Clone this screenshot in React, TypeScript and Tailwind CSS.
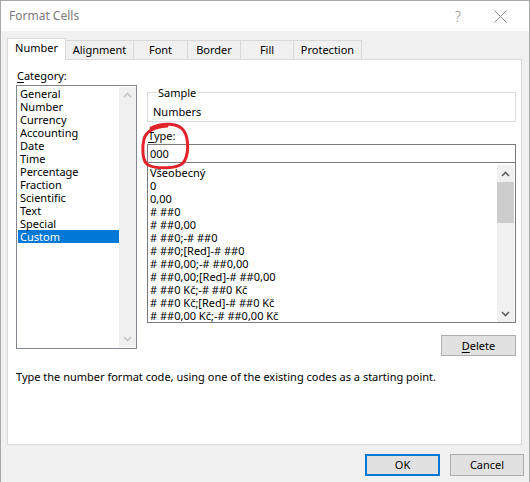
import React from "react";

const categories = [
  "General",
  "Number",
  "Currency",
  "Accounting",
  "Date",
  "Time",
  "Percentage",
  "Fraction",
  "Scientific",
  "Text",
  "Special",
  "Custom",
];

const formats = [
  "Všeobecný",
  "0",
  "0,00",
  "# ##0",
  "# ##0,00",
  "# ##0;-# ##0",
  "# ##0;[Red]-# ##0",
  "# ##0,00;-# ##0,00",
  "# ##0,00;[Red]-# ##0,00",
  "# ##0 Kč;-# ##0 Kč",
  "# ##0 Kč;[Red]-# ##0 Kč",
  "# ##0,00 Kč;-# ##0,00 Kč",
];

const tabs = [
  { label: "Alignment", w: "w-[68px]" },
  { label: "Font", w: "w-[54px]" },
  { label: "Border", w: "w-[53px]" },
  { label: "Fill", w: "w-[53px]" },
  { label: "Protection", w: "w-[68px]" },
];

function Chevron({ up, color }: { up?: boolean; color: string }) {
  return (
    <svg width="9" height="6" viewBox="0 0 9 6">
      <path
        d={up ? "M1 5 L4.5 1.5 L8 5" : "M1 1 L4.5 4.5 L8 1"}
        fill="none"
        stroke={color}
        strokeWidth="1.6"
      />
    </svg>
  );
}

export default function App() {
  return (
    <div
      className="relative w-[530px] h-[482px] bg-[#f0f0f0] border-t border-l border-r border-[#a8a8a8] text-[11px] text-black flex flex-col"
      style={{ fontFamily: '"Noto Sans", "Open Sans", sans-serif' }}
    >
      {/* title bar */}
      <div className="h-[30px] bg-white flex items-center pl-[8px] pr-[22px] shrink-0">
        <span className="text-[#7a7a7a] text-[12px]">Format Cells</span>
        <span className="ml-auto mr-[33px] text-[#8a8a8a] text-[14px] font-light">?</span>
        <svg width="13" height="13" viewBox="0 0 13 13">
          <path d="M0.5 0.5 L12.5 12.5 M12.5 0.5 L0.5 12.5" stroke="#8a8a8a" strokeWidth="1" />
        </svg>
      </div>

      <div className="pl-[6px] pt-[7px] flex flex-col">
        {/* tabs */}
        <div className="flex items-end h-[21px]">
          <div className="relative z-10 -mb-px h-[22px] w-[59px] bg-white border-t border-l border-r border-[#d9d9d9] flex items-center justify-center pb-[2px]">
            Number
          </div>
          {tabs.map((t) => (
            <div
              key={t.label}
              className={`h-[19px] ${t.w} border-t border-r border-[#d9d9d9] flex items-center justify-center`}
            >
              {t.label}
            </div>
          ))}
        </div>

        {/* panel */}
        <div className="w-[515px] h-[386px] bg-white border border-[#d9d9d9] pl-[8px] pt-[8px] flex flex-col">
          <div className="flex gap-[10px]">
            {/* category */}
            <div className="flex flex-col w-[121px]">
              <div className="h-[17px] leading-[15px] pl-[1px]">
                <span className="underline underline-offset-2">C</span>ategory:
              </div>
              <div className="h-[264px] border border-[#828790] flex">
                <div className="flex-1 pt-[1px] pl-[1px]">
                  {categories.map((c) => (
                    <div
                      key={c}
                      className={`h-[13px] leading-[13px] pl-[2px] w-[101px] ${c === "Custom" ? "bg-[#0078d7] text-white" : ""}`}
                    >
                      {c}
                    </div>
                  ))}
                </div>
                <div className="w-[17px] mt-[1px] mb-[1px] bg-[#f0f0f0] flex flex-col justify-between items-center py-[5px]">
                  <Chevron up color="#c6c6c6" />
                  <Chevron color="#c6c6c6" />
                </div>
              </div>
            </div>

            {/* right column */}
            <div className="flex flex-col w-[369px] mt-[17px]">
              <fieldset className="border border-[#dcdcdc] pl-[5px] pt-[4px] pb-[2px]">
                <legend className="ml-[4px] px-[1px] leading-[15px]">Sample</legend>
                <div className="leading-[15px]">Numbers</div>
              </fieldset>
              <div className="mt-[6px] h-[16px] leading-[16px] pl-[1px]">
                <span className="underline underline-offset-2">T</span>ype:
              </div>
              <div className="h-[19px] border border-[#7a7a7a] pl-[2px] leading-[17px]">000</div>
              <div className="h-[160px] border-l border-r border-b border-[#7a7a7a] flex">
                <div className="flex-1 pt-[3px] pl-[2px]">
                  {formats.map((f) => (
                    <div key={f} className="h-[13px] leading-[13px] whitespace-pre">
                      {f}
                    </div>
                  ))}
                </div>
                <div className="w-[17px] mt-[2px] mr-[1px] bg-[#f0f0f0] flex flex-col">
                  <div className="h-[17px] flex items-center justify-center">
                    <Chevron up color="#606060" />
                  </div>
                  <div className="h-[41px] bg-[#cdcdcd]" />
                  <div className="flex-1" />
                  <div className="h-[17px] flex items-center justify-center">
                    <Chevron color="#606060" />
                  </div>
                </div>
              </div>
              <button className="self-end mt-[12px] w-[75px] h-[21px] bg-[#e1e1e1] border border-[#adadad] leading-[19px]">
                <span className="underline underline-offset-2">D</span>elete
              </button>
            </div>
          </div>
          <div className="mt-[13px] leading-[15px]">
            Type the number format code, using one of the existing codes as a starting point.
          </div>
        </div>

        {/* footer */}
        <div className="flex justify-end gap-[10px] pr-[5px] mt-[9px]">
          <button className="w-[75px] h-[22px] bg-[#e1e1e1] border-2 border-[#0078d7]">OK</button>
          <button className="w-[74px] h-[22px] bg-[#e1e1e1] border border-[#adadad]">Cancel</button>
        </div>
      </div>

      {/* red hand-drawn mark */}
      <svg
        className="absolute left-0 top-0 pointer-events-none"
        width="530"
        height="482"
        viewBox="0 0 530 482"
      >
        <path
          d="M150 127 C162 121 178 122 183 130 C188 138 188 155 182 162 C176 168 155 168 147 164 C141 160 141 146 143 138 C145 131 152 126 166 125"
          fill="none"
          stroke="#e3232a"
          strokeWidth="3"
          strokeLinecap="round"
        />
      </svg>
    </div>
  );
}
